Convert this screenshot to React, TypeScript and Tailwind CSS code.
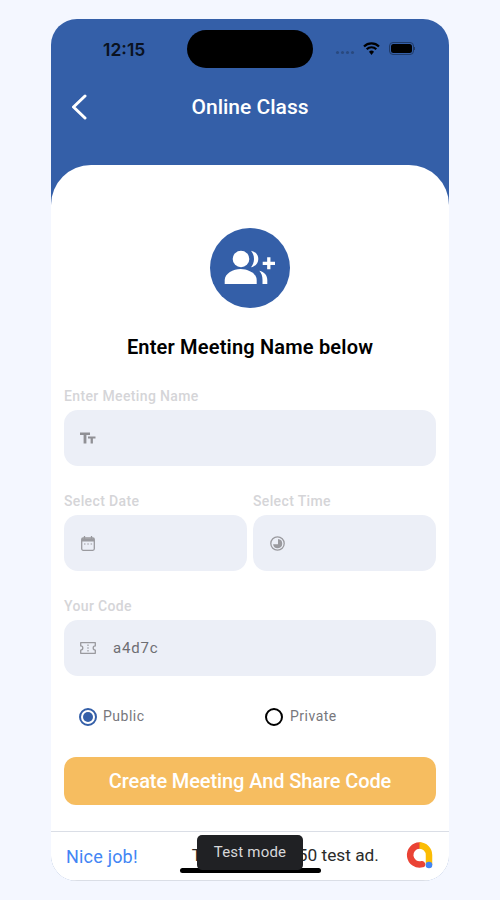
const roboto = "font-['Roboto',sans-serif]";

function AddUsersIcon() {
  return (
    <svg width="80" height="80" viewBox="0 0 80 80" fill="none">
      <circle cx="40" cy="40" r="40" fill="#345FA8" />
      <circle cx="31" cy="31" r="8.300" fill="#fff" />
      <path d="M14.700 56v-4c0-6.500 8.500-11 16-11s16 4.500 16 11v4z" fill="#fff" />
      <path d="M41 22.700c4.500 1 7.300 4 7.300 8.300s-2.800 7.300-7.300 8.300c1.800-2.300 3-5 3-8.300s-1.200-6-3-8.300z" fill="#fff" />
      <path d="M49.300 42.700c5 1.300 8 4.500 8 9.300v4h-4.800v-4c0-3.800-1-7-3.200-9.300z" fill="#fff" />
      <path d="M52.700 35.300H65M58.800 29.300v12" stroke="#fff" strokeWidth="3.300" />
    </svg>
  );
}

function TextIcon() {
  return (
    <svg width="16" height="12" viewBox="0 0 16 12" fill="#909095">
      <path d="M0 .500h10v2.600H6.400V11.500H3.600V3.100H0z" />
      <path d="M8 4.500h7.500v2h-2.600v5h-2.300v-5H8z" />
    </svg>
  );
}

function CalendarIcon() {
  return (
    <svg width="14" height="15" viewBox="0 0 14 15" fill="none">
      <rect x="0.700" y="2" width="12.600" height="12.300" rx="1.500" stroke="#9a9a9f" strokeWidth="1.300" />
      <path d="M1 2.500h12v3H1z" fill="#9a9a9f" />
      <path d="M3.500 0v3M10.500 0v3" stroke="#9a9a9f" strokeWidth="1.300" />
      <path d="M3 8h1.500M6.300 8h1.500M9.600 8h1.500" stroke="#9a9a9f" strokeWidth="1.200" />
    </svg>
  );
}

function ClockIcon() {
  return (
    <svg width="15" height="15" viewBox="0 0 15 15" fill="none">
      <circle cx="7.500" cy="7.500" r="6.700" stroke="#9a9a9f" strokeWidth="1.300" />
      <path d="M8 3a4.600 4.600 0 1 1-4.900 5.300H8z" fill="#9a9a9f" />
    </svg>
  );
}

function TicketIcon() {
  return (
    <svg width="16" height="12" viewBox="0 0 16 12" fill="none">
      <path
        d="M.700.700h14.600v3.200a2.100 2.100 0 0 0 0 4.200v3.200H.700V8.100a2.100 2.100 0 0 0 0-4.200z"
        stroke="#9a9a9f"
        strokeWidth="1.300"
        strokeLinejoin="round"
      />
      <path d="M8 2.500v1.500M8 5.300v1.500M8 8v1.500" stroke="#9a9a9f" strokeWidth="1.200" />
    </svg>
  );
}

function Field({ label, icon, value }: { label: string; icon: React.ReactNode; value?: string }) {
  return (
    <div className="flex-1">
      <div className={`${roboto} text-[14px] leading-[20px] font-medium tracking-[0.36px] text-[#d5d5d8]`}>{label}</div>
      <div className="mt-[4px] flex h-[56px] items-center rounded-[14px] bg-[#ecEFF7] pl-[16px]">
        <div className="flex w-[16px] justify-center">{icon}</div>
        {value && (
          <span className={`${roboto} ml-[17px] text-[15px] tracking-[0.8px] text-[#6e6e73]`}>{value}</span>
        )}
      </div>
    </div>
  );
}

export default function App() {
  return (
    <div className="min-h-[900px] bg-[#f4f7ff] pt-[19px]">
      <div className="relative mx-auto flex h-[862px] w-[398px] flex-col overflow-hidden rounded-[26px] bg-[#345fa8]">
        {/* status bar */}
        <div className="flex h-[60px] items-start justify-between pl-[52px] pr-[34px] pt-[21px]">
          <span className="font-['Inter',sans-serif] text-[17.500px] leading-[20px] font-semibold text-[#0a1220]">12:15</span>
          <div className="flex items-center gap-[9px] pt-[2px]">
            <div className="flex gap-[2px] pt-[8px]">
              <span className="h-[3px] w-[3px] rounded-full bg-[#29497f]" />
              <span className="h-[3px] w-[3px] rounded-full bg-[#29497f]" />
              <span className="h-[3px] w-[3px] rounded-full bg-[#29497f]" />
              <span className="h-[3px] w-[3px] rounded-full bg-[#29497f]" />
            </div>
            <svg width="17" height="13" viewBox="0 0 17 13" fill="none">
              <path d="M1 4.500a10.500 10.500 0 0 1 15 0" stroke="#000" strokeWidth="2.200" />
              <path d="M3.700 7.300a6.700 6.700 0 0 1 9.600 0" stroke="#000" strokeWidth="2.200" />
              <path d="M8.500 13 6 9.800a3.500 3.500 0 0 1 5 0z" fill="#000" />
            </svg>
            <div className="flex items-center">
              <div className="flex h-[13px] w-[25px] items-center justify-center rounded-[4px] border border-[#1f3a68]">
                <div className="h-[9px] w-[21px] rounded-[2.500px] bg-black" />
              </div>
              <div className="h-[3px] w-[1px] bg-[#1f3a68]" />
            </div>
          </div>
        </div>
        <div className="absolute left-[136px] top-[11px] h-[38px] w-[126px] rounded-[19px] bg-black" />

        {/* title */}
        <div className="relative flex h-[58px] items-center justify-center">
          <svg className="absolute left-[19px] top-[15px]" width="18" height="26" viewBox="0 0 18 26" fill="none">
            <path d="M15 2 3.500 13 15 24" stroke="#fff" strokeWidth="3" strokeLinecap="round" strokeLinejoin="round" />
          </svg>
          <span className={`${roboto} text-[21px] font-medium text-white`}>Online Class</span>
        </div>
        <div className="h-[28px]" />

        {/* form card */}
        <div className="flex flex-1 flex-col rounded-t-[40px] bg-white">
          <div className="flex justify-center pt-[63px]">
            <AddUsersIcon />
          </div>
          <h1 className={`${roboto} mt-[25px] text-center text-[20px] leading-[28px] font-semibold tracking-[0.18px] text-black`}>
            Enter Meeting Name below
          </h1>
          <div className="flex flex-col gap-[25px] px-[13px] pt-[25px]">
            <Field label="Enter Meeting Name" icon={<TextIcon />} />
            <div className="flex gap-[6px]">
              <Field label="Select Date" icon={<CalendarIcon />} />
              <Field label="Select Time" icon={<ClockIcon />} />
            </div>
            <Field label="Your Code" icon={<TicketIcon />} value="a4d7c" />
          </div>

          <div className="flex px-[28px] pt-[30px]">
            <div className="flex w-[186px] items-center gap-[6px]">
              <span className="flex h-[18px] w-[18px] items-center justify-center rounded-full border-2 border-[#345fa8]">
                <span className="h-[10px] w-[10px] rounded-full bg-[#345fa8]" />
              </span>
              <span className={`${roboto} text-[14px] tracking-[0.5px] text-[#77777c]`}>Public</span>
            </div>
            <div className="flex items-center gap-[7px]">
              <span className="h-[18px] w-[18px] rounded-full border-2 border-black" />
              <span className={`${roboto} text-[14px] tracking-[0.5px] text-[#77777c]`}>Private</span>
            </div>
          </div>

          <button className={`${roboto} mx-[13px] mt-[30px] h-[48px] rounded-[12px] bg-[#f6bd60] text-[20px] font-medium tracking-[-0.1px] text-white`}>
            Create Meeting And Share Code
          </button>

          {/* test ad banner */}
          <div className="mt-[26px] flex h-[50px] items-center border-y border-[#dadee6] bg-white px-[15px]">
            <span className={`${roboto} text-[18px] tracking-[0.2px] text-[#4285f4]`}>Nice job!</span>
            <span className={`${roboto} ml-[54px] text-[17.300px] text-[#2b2b2b]`}>This is a 320x50 test ad.</span>
            <svg className="ml-auto" width="28" height="28" viewBox="0 0 28 28" fill="none">
              <path d="M13.500 3.500a9.500 9.500 0 1 0 2.500 18.700" stroke="#ea4335" strokeWidth="6.500" strokeLinecap="round" fill="none" />
              <path d="M13.500 3.500a9.500 9.500 0 0 1 9.500 9.500v10" stroke="#fbbc04" strokeWidth="6.500" fill="none" />
              <circle cx="23" cy="23" r="3.300" fill="#4285f4" />
            </svg>
          </div>
        </div>

        <div className="absolute bottom-[8px] left-[129px] h-[5px] w-[141px] rounded-full bg-black" />
        <div className={`${roboto} absolute left-[146px] top-[816px] flex h-[35px] w-[106px] items-center justify-center rounded-[5px] bg-[#202124] text-[15px] tracking-[0.2px] text-[#d8d8da]`}>
          Test mode
        </div>
      </div>
    </div>
  );
}
